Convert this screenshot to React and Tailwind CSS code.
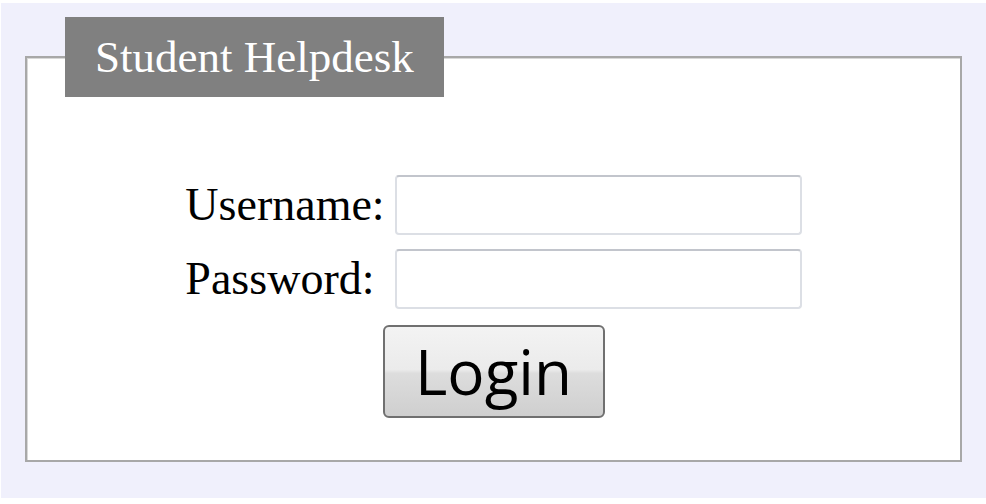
import React from 'react';

const serif = { fontFamily: '"Liberation Serif", "Times New Roman", serif' };

export default function App() {
    return (
        <div className="w-[986px] h-[504px] bg-white pt-[3px] pl-[1px]">
            <div className="h-[495px] bg-[#f0f0fc] pl-[24px] pr-[24px] pt-[14px]" style={serif}>
                <fieldset className="w-[937px] h-[445px] border-2 border-[#a8a8a8] bg-white shadow-[inset_1px_1px_0_#d8d8d8]">
                    <legend className="ml-[38px] h-[80px] px-[30px] bg-[#808080] text-white text-[45px] leading-[80px]">
                        Student Helpdesk
                    </legend>
                    {/* Login form */}
                    <div className="flex flex-col items-center pt-[78px]">
                        <div className="grid grid-cols-[auto_407px] gap-x-[10px] gap-y-[14px] items-center text-[46px] leading-none text-black">
                            <label>Username:</label>
                            <input
                                type="text"
                                className="h-[60px] rounded-[4px] border-2 border-[#dcdfe5] border-t-[#c2c5cc] bg-white outline-none"
                            />
                            <label>Password:</label>
                            <input
                                type="password"
                                className="h-[60px] rounded-[4px] border-2 border-[#dcdfe5] border-t-[#c2c5cc] bg-white outline-none"
                            />
                        </div>
                        <button
                            className="mt-[16px] w-[222px] h-[93px] rounded-[6px] border-2 border-[#707070] bg-[linear-gradient(#f3f3f3,#ebebeb_48%,#dddddd_52%,#cfcfcf)] text-black text-[62px] leading-none pb-[2px]"
                            style={{ fontFamily: '"Open Sans", "Noto Sans", sans-serif' }}
                        >
                            Login
                        </button>
                    </div>
                </fieldset>
            </div>
        </div>
    );
}
